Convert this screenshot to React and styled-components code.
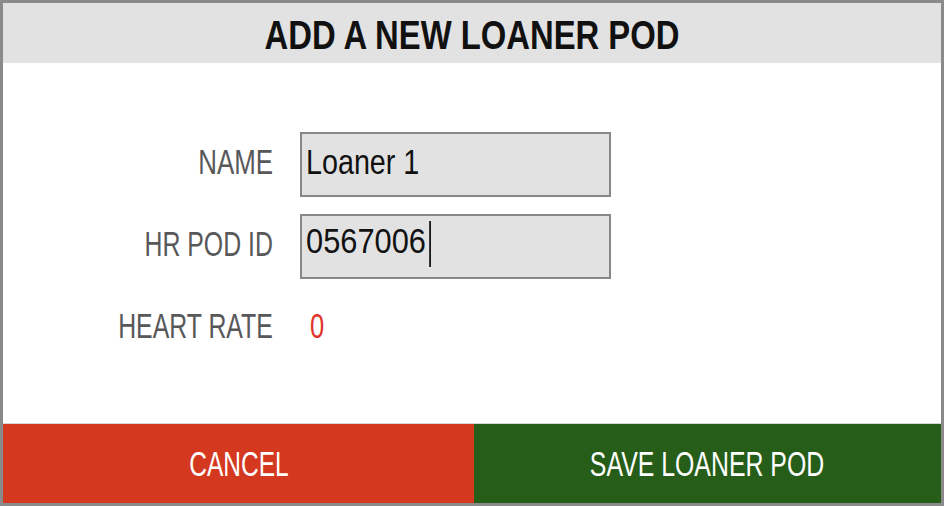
import React from "react";
import styled, { createGlobalStyle } from "styled-components";

const GlobalStyle = createGlobalStyle`
  html, body {
    margin: 0;
    padding: 0;
    background: #ffffff;
  }
  * {
    box-sizing: border-box;
  }
`;

const Dialog = styled.div`
  width: 944px;
  height: 506px;
  display: flex;
  flex-direction: column;
  border: 3px solid #8a8a8a;
  background: #ffffff;
  font-family: "Liberation Sans", Arial, sans-serif;
`;

// narrow face: squeeze the glyphs horizontally
const Narrow = styled.span`
  display: inline-block;
  white-space: nowrap;
  transform: scaleX(${(p) => p.$sx || 0.72});
  transform-origin: ${(p) => p.$origin || "center"};
`;

const Header = styled.div`
  height: 60px;
  display: flex;
  align-items: center;
  justify-content: center;
  padding-top: 4px;
  background: #e2e2e2;
  color: #111;
  font-size: 40px;
  font-weight: 700;
`;

const Body = styled.div`
  flex: 1;
  display: grid;
  grid-template-columns: 270px 311px;
  grid-auto-rows: 65px;
  row-gap: 17px;
  column-gap: 27px;
  align-content: start;
  padding-top: 69px;
`;

const Label = styled.div`
  display: flex;
  align-items: center;
  justify-content: flex-end;
  padding-bottom: 5px;
  color: #58585a;
  font-size: 35px;
`;

const Field = styled.div`
  display: flex;
  align-items: center;
  padding: 0 4px 5px;
  border: 2px solid #878787;
  background: #e2e2e2;
  color: #111;
  font-size: 35px;
`;

const Caret = styled.span`
  display: inline-block;
  width: 2px;
  height: 46px;
  margin-left: 4px;
  vertical-align: middle;
  background: #111;
`;

const Reading = styled.div`
  display: flex;
  align-items: center;
  padding: 0 0 5px 10px;
  color: ${(p) => p.color || "#111"};
  font-size: 35px;
`;

const Footer = styled.div`
  height: 80px;
  display: grid;
  grid-template-columns: 471px 1fr;
  border-top: 1px solid #d8d8d8;
`;

const Action = styled.button`
  border: 0;
  margin: 0;
  outline: 0;
  display: flex;
  align-items: center;
  justify-content: center;
  background: ${(p) => p.bg};
  color: #ffffff;
  font-family: inherit;
  font-size: 35px;
  cursor: pointer;
`;

export default function App() {
  return (
    <>
      <GlobalStyle />
      <Dialog>
        <Header>
          <Narrow $sx={0.82}>ADD A NEW LOANER POD</Narrow>
        </Header>
        <Body>
          <Label>
            <Narrow $sx={0.74} $origin="right">NAME</Narrow>
          </Label>
          <Field>
            <Narrow $sx={0.82} $origin="left">Loaner 1</Narrow>
          </Field>
          <Label>
            <Narrow $sx={0.71} $origin="right">HR POD ID</Narrow>
          </Label>
          <Field>
            <Narrow $sx={0.88} $origin="left">
              0567006
              <Caret />
            </Narrow>
          </Field>
          <Label>
            <Narrow $sx={0.71} $origin="right">HEART RATE</Narrow>
          </Label>
          <Reading color="#e0352b">
            <Narrow $sx={0.73} $origin="left">0</Narrow>
          </Reading>
        </Body>
        <Footer>
          <Action bg="#d4381f">
            <Narrow $sx={0.7}>CANCEL</Narrow>
          </Action>
          <Action bg="#265e19">
            <Narrow $sx={0.71}>SAVE LOANER POD</Narrow>
          </Action>
        </Footer>
      </Dialog>
    </>
  );
}
